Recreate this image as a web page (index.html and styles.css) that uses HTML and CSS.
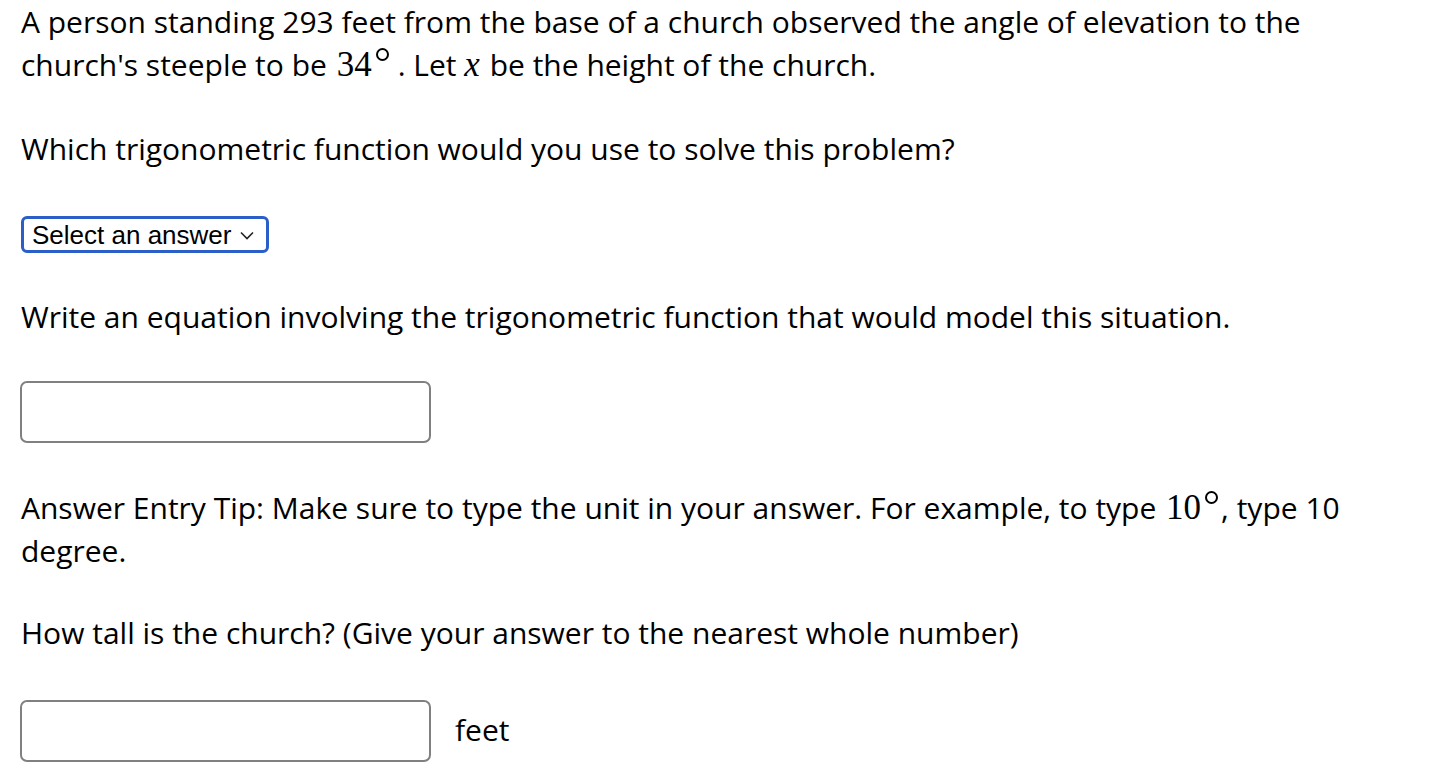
FILE: index.html
```html
<!DOCTYPE html>
<html>
<head>
<meta charset="utf-8">
<link rel="stylesheet" href="styles.css">
</head>
<body>
<div class="question">
  <p class="p1">A person standing 293 feet from the base of a church observed the angle of elevation to the church's steeple to be <span class="math">34<span class="deg"></span></span>. Let <span class="math mi">x</span> be the height of the church.</p>
  <p class="p2">Which trigonometric function would you use to solve this problem?</p>
  <div class="sel-row">
    <div class="select"><span class="sel-text">Select an answer</span><svg class="chev" width="14" height="9" viewBox="0 0 14 9"><path d="M1 1.5 L7 7.5 L13 1.5" fill="none" stroke="#222" stroke-width="1.6"/></svg></div>
  </div>
  <p class="p3">Write an equation involving the trigonometric function that would model this situation.</p>
  <div class="field f1"></div>
  <p class="p4">Answer Entry Tip: Make sure to type the unit in your answer. For example, to type <span class="math">10<span class="deg deg2"></span></span>, type 10 degree.</p>
  <p class="p5">How tall is the church? (Give your answer to the nearest whole number)</p>
  <div class="answer-row">
    <div class="field"></div>
    <span class="unit">feet</span>
  </div>
</div>
</body>
</html>
```

FILE: styles.css
```css
html, body {
  margin: 0;
  padding: 0;
  background: #fff;
}
.question {
  padding: 0 20px 0 21px;
  font-family: "Open Sans", sans-serif;
  font-size: 30px;
  line-height: 43px;
  color: #000;
  width: 1340px;
}
p { margin: 0; }
.p2 { margin-top: 41px; }
.sel-row { margin-top: 46px; display: flex; }
.select {
  box-sizing: border-box;
  height: 37px;
  width: 248px;
  border: 3px solid #2b5fc7;
  border-radius: 6px;
  display: flex;
  align-items: center;
  padding-left: 8px;
  gap: 9px;
  font-family: "Liberation Sans", Arial, sans-serif;
  font-size: 26px;
  line-height: 1;
}
.chev { margin-top: 2px; }
.p3 { margin-top: 41.5px; }
.field {
  box-sizing: border-box;
  width: 411px;
  height: 62px;
  border: 2px solid #808080;
  border-radius: 7px;
}
.f1 { margin-top: 43.5px; margin-left: -1px; }
.p4 { margin-top: 42.5px; }
.p5 { margin-top: 39px; }
.answer-row {
  margin-top: 46px;
  margin-left: -1px;
  display: flex;
  align-items: center;
  gap: 24px;
}
.unit { line-height: 43px; margin-top: -2px; }
.math {
  font-family: "Liberation Serif", "DejaVu Serif", serif;
  font-size: 35px;
  line-height: 1;
  margin-left: 2px;
}
.mi { font-style: italic; margin-left: 0; margin-right: 2px; }
.deg {
  display: inline-block;
  box-sizing: border-box;
  width: 13px;
  height: 13px;
  border: 2px solid #000;
  border-radius: 50%;
  vertical-align: 15px;
  margin-left: 4px;
  margin-right: 9px;
}
.deg2 { margin-right: 3px; }
```
